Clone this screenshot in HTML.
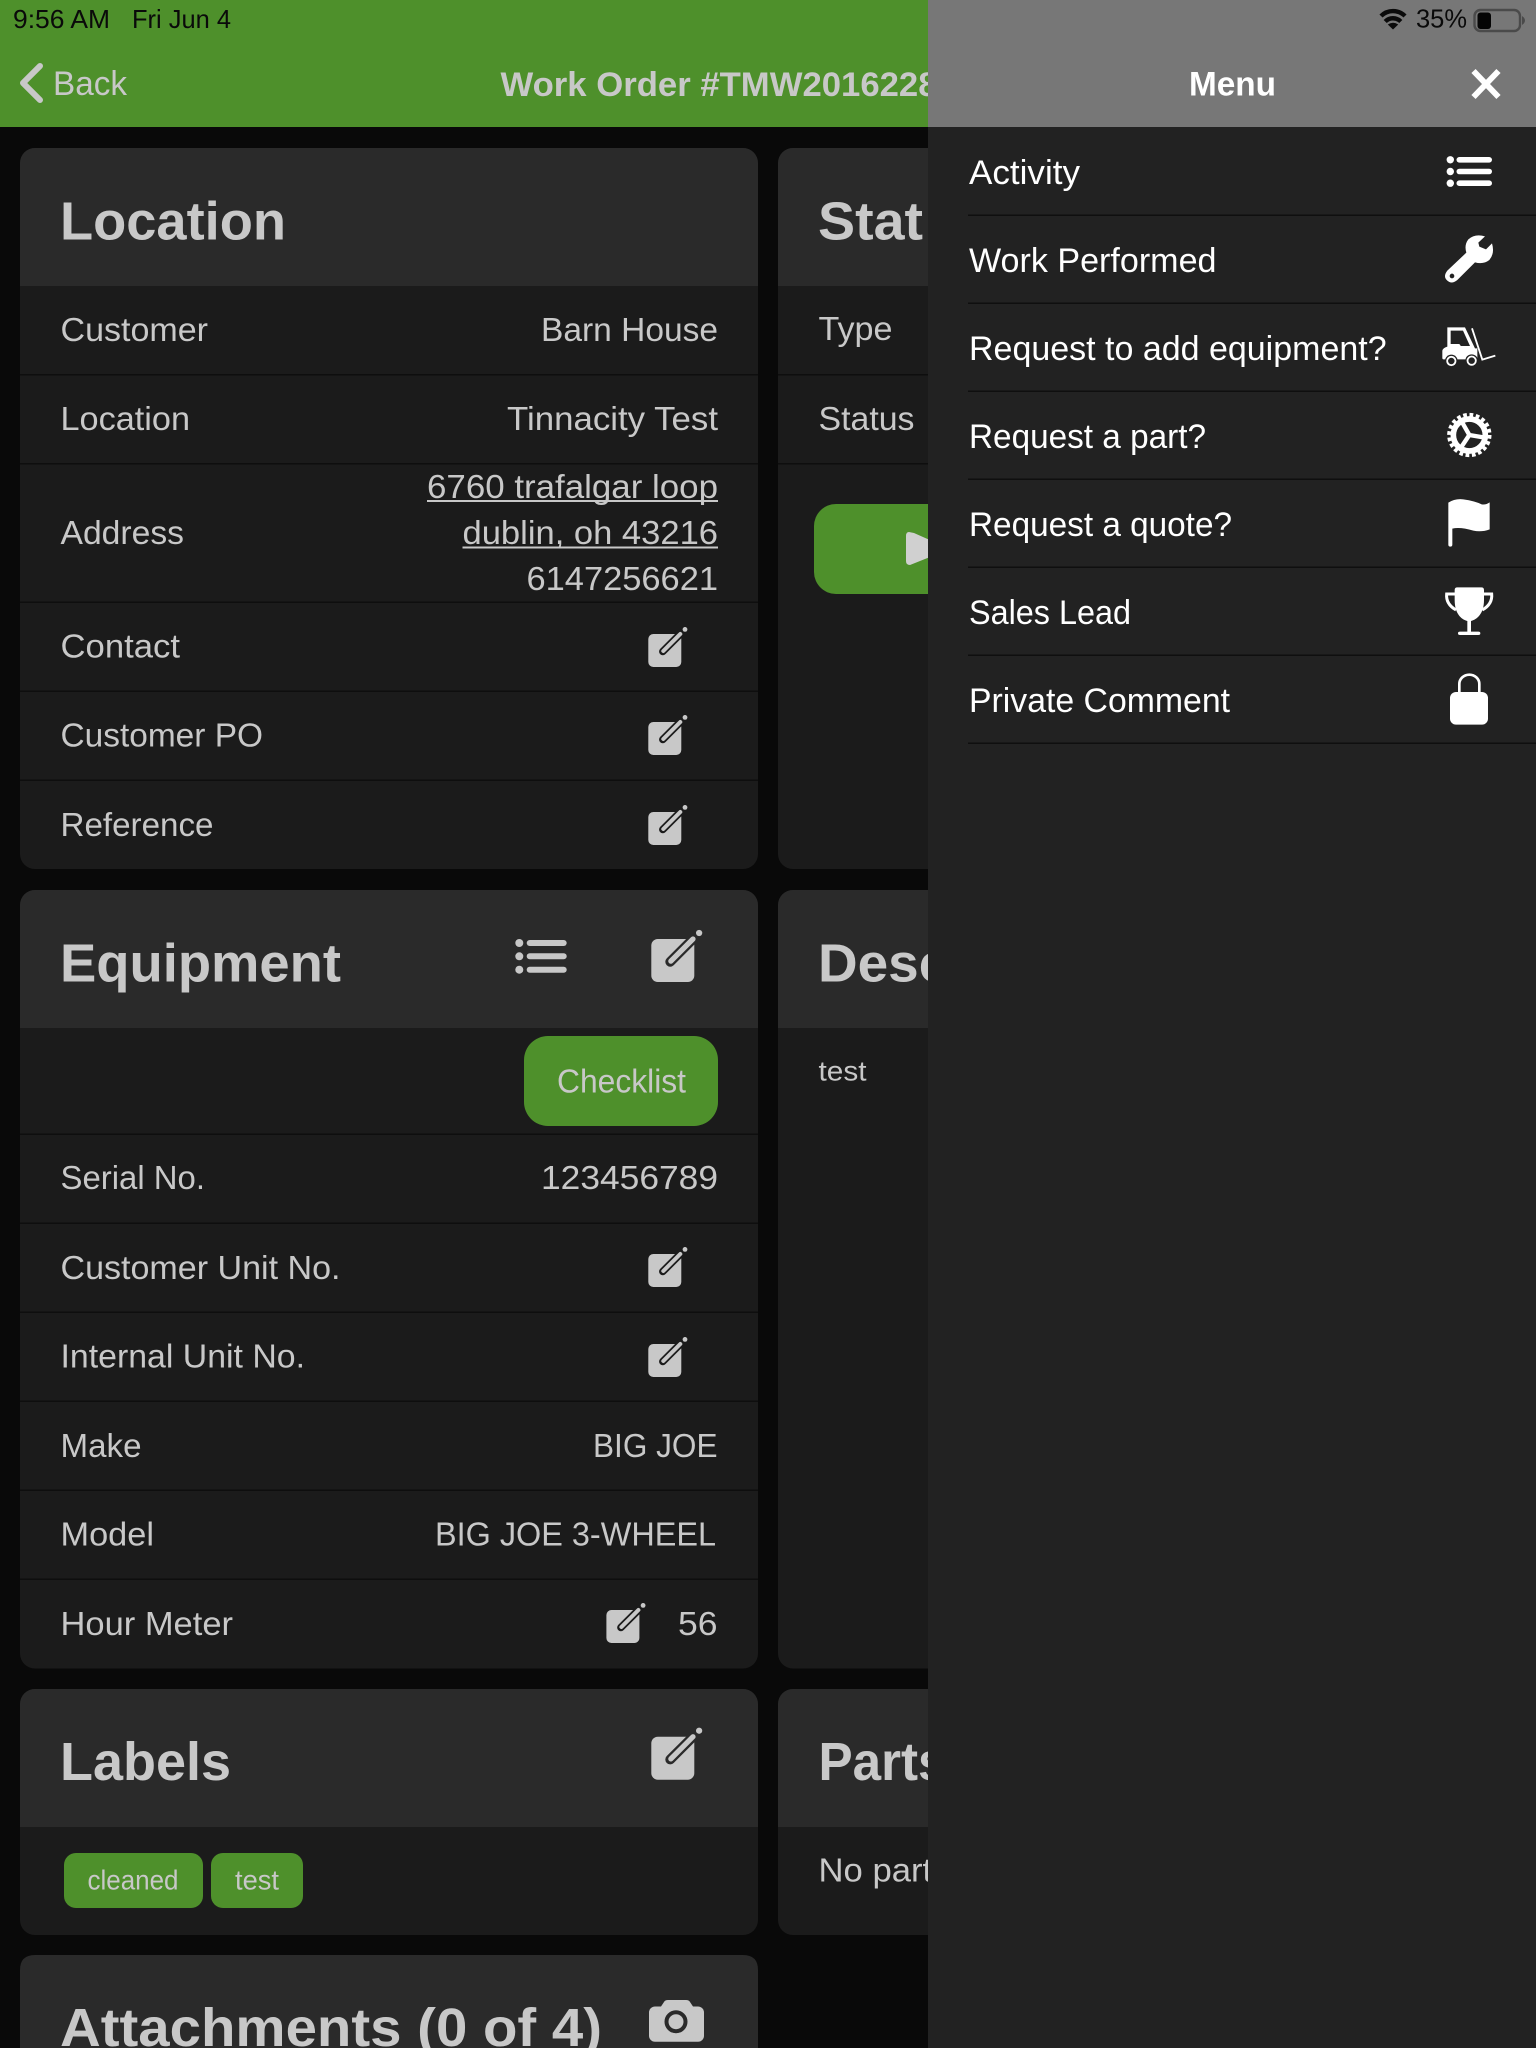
<!DOCTYPE html>
<html lang="en">
<head>
<meta charset="utf-8">
<title>Work Order</title>
<style>
html,body{margin:0;padding:0;background:#090909;width:1536px;height:2048px;overflow:hidden}
svg{display:block;position:absolute;left:0;top:0;overflow:hidden}
text{font-family:"Liberation Sans",sans-serif;fill:#c8c8c8}
.b{font-size:33px}
.h{font-size:54px;font-weight:700}
.s{font-size:26px;fill:#0a0a0a}
.m{font-size:34px;fill:#fff}
.t{font-size:34px;font-weight:700}
.sm{font-size:28px}
.sep{fill:#0e0e0e}
.head{fill:#2a2a2a}
.body{fill:#1b1b1b}
.grn{fill:#4e902b}
</style>
</head>
<body>
<svg width="1536" height="2048" viewBox="0 0 1536 2048" xmlns="http://www.w3.org/2000/svg">
<defs>
<g id="ed">
  <rect x="0" y="0" width="33" height="33" rx="5" fill="#c8c8c8"/>
  <path d="M14.5 17.5 L33 -1" stroke="#1b1b1b" stroke-width="7.5" stroke-linecap="round" fill="none"/>
  <path d="M15 17 L32 0" stroke="#c8c8c8" stroke-width="4" stroke-linecap="round" fill="none"/>
  <circle cx="36.7" cy="-4.6" r="2.4" fill="#c8c8c8"/>
</g>
<g id="edh">
  <rect x="0" y="0" width="33" height="33" rx="5" fill="#c8c8c8"/>
  <path d="M14.5 17.5 L33 -1" stroke="#2a2a2a" stroke-width="7.5" stroke-linecap="round" fill="none"/>
  <path d="M15 17 L32 0" stroke="#c8c8c8" stroke-width="4" stroke-linecap="round" fill="none"/>
  <circle cx="36.7" cy="-4.6" r="2.4" fill="#c8c8c8"/>
</g>
<clipPath id="c1"><rect x="20" y="148" width="738" height="721" rx="15"/></clipPath>
<clipPath id="c2"><rect x="778" y="148" width="738" height="721" rx="15"/></clipPath>
<clipPath id="c3"><rect x="20" y="890" width="738" height="778.5" rx="15"/></clipPath>
<clipPath id="c4"><rect x="778" y="890" width="738" height="778.5" rx="15"/></clipPath>
<clipPath id="c5"><rect x="20" y="1689" width="738" height="246" rx="15"/></clipPath>
<clipPath id="c6"><rect x="778" y="1689" width="738" height="246" rx="15"/></clipPath>
<clipPath id="statclip"><rect x="800" y="190" width="125" height="70"/></clipPath>
<clipPath id="bottomclip"><rect x="0" y="1955" width="928" height="93"/></clipPath>
</defs>

<rect width="1536" height="2048" fill="#090909"/>

<!-- top bar -->
<rect width="1536" height="127" fill="#4e902b"/>
<text class="s" x="13" y="28" textLength="97" lengthAdjust="spacingAndGlyphs">9:56 AM</text>
<text class="s" x="132" y="28" textLength="99" lengthAdjust="spacingAndGlyphs">Fri Jun 4</text>
<polyline points="40,66 23,83 40,100" fill="none" stroke="#c8c8c8" stroke-width="6" stroke-linecap="round" stroke-linejoin="round"/>
<text x="53" y="95" font-size="34" textLength="74" lengthAdjust="spacingAndGlyphs">Back</text>
<text class="t" x="500.5" y="96" textLength="437" lengthAdjust="spacingAndGlyphs">Work Order #TMW2016228</text>

<!-- Location card -->
<g clip-path="url(#c1)">
  <rect class="body" x="20" y="148" width="738" height="721"/>
  <rect class="head" x="20" y="148" width="738" height="138"/>
  <rect class="sep" x="20" y="374" width="738" height="1.5"/>
  <rect class="sep" x="20" y="463" width="738" height="1.5"/>
  <rect class="sep" x="20" y="601.5" width="738" height="1.5"/>
  <rect class="sep" x="20" y="690.5" width="738" height="1.5"/>
  <rect class="sep" x="20" y="779.5" width="738" height="1.5"/>
</g>
<text class="h" x="60" y="239.5" textLength="226" lengthAdjust="spacingAndGlyphs">Location</text>
<text class="b" x="60.5" y="341" textLength="147.5" lengthAdjust="spacingAndGlyphs">Customer</text>
<text class="b" x="541" y="341" textLength="177" lengthAdjust="spacingAndGlyphs">Barn House</text>
<text class="b" x="60.5" y="430" textLength="129.5" lengthAdjust="spacingAndGlyphs">Location</text>
<text class="b" x="507" y="430" textLength="211" lengthAdjust="spacingAndGlyphs">Tinnacity Test</text>
<text class="b" x="60.5" y="544" textLength="123.5" lengthAdjust="spacingAndGlyphs">Address</text>
<text class="b" x="427" y="498" textLength="291" lengthAdjust="spacingAndGlyphs">6760 trafalgar loop</text>
<rect x="427" y="500" width="291" height="2" fill="#c8c8c8"/>
<text class="b" x="462.5" y="544" textLength="255.5" lengthAdjust="spacingAndGlyphs">dublin, oh 43216</text>
<rect x="462.5" y="546.5" width="255.5" height="2" fill="#c8c8c8"/>
<text class="b" x="526.5" y="590" textLength="191.5" lengthAdjust="spacingAndGlyphs">6147256621</text>
<text class="b" x="60.5" y="657.5" textLength="119.5" lengthAdjust="spacingAndGlyphs">Contact</text>
<use href="#ed" x="648.3" y="634"/>
<text class="b" x="60.5" y="746.5" textLength="202.5" lengthAdjust="spacingAndGlyphs">Customer PO</text>
<use href="#ed" x="648.3" y="722"/>
<text class="b" x="60.5" y="836" textLength="153" lengthAdjust="spacingAndGlyphs">Reference</text>
<use href="#ed" x="648.3" y="812"/>

<!-- Status card -->
<g clip-path="url(#c2)">
  <rect class="body" x="778" y="148" width="738" height="721"/>
  <rect class="head" x="778" y="148" width="738" height="138"/>
  <rect class="sep" x="778" y="374" width="738" height="1.5"/>
  <rect class="sep" x="778" y="463" width="738" height="1.5"/>
</g>
<g clip-path="url(#statclip)"><text class="h" x="818" y="239.5" textLength="170" lengthAdjust="spacingAndGlyphs">Status</text></g>
<text class="b" x="818.5" y="340" textLength="74" lengthAdjust="spacingAndGlyphs">Type</text>
<text class="b" x="818.5" y="430" textLength="96" lengthAdjust="spacingAndGlyphs">Status</text>
<rect class="grn" x="814" y="504" width="300" height="90" rx="22"/>
<path d="M909 532 Q906 532 906 536 V561 Q906 565 910 565 L950 549 L914 533 Z" fill="#d0d0d0"/>

<!-- Equipment card -->
<g clip-path="url(#c3)">
  <rect class="body" x="20" y="890" width="738" height="778.5"/>
  <rect class="head" x="20" y="890" width="738" height="138"/>
  <rect class="sep" x="20" y="1133.5" width="738" height="1.5"/>
  <rect class="sep" x="20" y="1222.5" width="738" height="1.5"/>
  <rect class="sep" x="20" y="1311.5" width="738" height="1.5"/>
  <rect class="sep" x="20" y="1400.5" width="738" height="1.5"/>
  <rect class="sep" x="20" y="1489.5" width="738" height="1.5"/>
  <rect class="sep" x="20" y="1578.5" width="738" height="1.5"/>
</g>
<text class="h" x="60" y="981.5" textLength="281" lengthAdjust="spacingAndGlyphs">Equipment</text>
<g fill="#c8c8c8">
  <circle cx="519.3" cy="943" r="4"/><circle cx="519.3" cy="956.3" r="4"/><circle cx="519.3" cy="969.7" r="4"/>
  <rect x="526.7" y="940" width="40" height="6" rx="3"/><rect x="526.7" y="953.3" width="40" height="6" rx="3"/><rect x="526.7" y="966.7" width="40" height="6" rx="3"/>
</g>
<use href="#edh" transform="translate(651.3 939) scale(1.303)"/>
<rect class="grn" x="524" y="1036" width="194" height="90" rx="24"/>
<text class="b" x="557" y="1092.7" textLength="129" lengthAdjust="spacingAndGlyphs">Checklist</text>
<text class="b" x="60.5" y="1189" textLength="144.5" lengthAdjust="spacingAndGlyphs">Serial No.</text>
<text class="b" x="541" y="1189" textLength="177" lengthAdjust="spacingAndGlyphs">123456789</text>
<text class="b" x="60.5" y="1279" textLength="280" lengthAdjust="spacingAndGlyphs">Customer Unit No.</text>
<use href="#ed" x="648.3" y="1254"/>
<text class="b" x="60.5" y="1367.5" textLength="244.5" lengthAdjust="spacingAndGlyphs">Internal Unit No.</text>
<use href="#ed" x="648.3" y="1344"/>
<text class="b" x="60.5" y="1457" textLength="81" lengthAdjust="spacingAndGlyphs">Make</text>
<text class="b" x="593" y="1457" textLength="124.5" lengthAdjust="spacingAndGlyphs">BIG JOE</text>
<text class="b" x="60.5" y="1545.7" textLength="93.5" lengthAdjust="spacingAndGlyphs">Model</text>
<text class="b" x="435" y="1545.7" textLength="281" lengthAdjust="spacingAndGlyphs">BIG JOE 3-WHEEL</text>
<text class="b" x="60.5" y="1635" textLength="172.5" lengthAdjust="spacingAndGlyphs">Hour Meter</text>
<use href="#ed" x="606.4" y="1610"/>
<text class="b" x="678" y="1635" textLength="39.5" lengthAdjust="spacingAndGlyphs">56</text>

<!-- Description card -->
<g clip-path="url(#c4)">
  <rect class="body" x="778" y="890" width="738" height="778.5"/>
  <rect class="head" x="778" y="890" width="738" height="138"/>
</g>
<text class="h" x="818" y="981.5" textLength="302" lengthAdjust="spacingAndGlyphs">Description</text>
<text class="sm" x="818.5" y="1080.5" textLength="48" lengthAdjust="spacingAndGlyphs">test</text>

<!-- Labels card -->
<g clip-path="url(#c5)">
  <rect class="body" x="20" y="1689" width="738" height="246"/>
  <rect class="head" x="20" y="1689" width="738" height="138"/>
</g>
<text class="h" x="60" y="1780.2" textLength="171" lengthAdjust="spacingAndGlyphs">Labels</text>
<use href="#edh" transform="translate(651.3 1736.7) scale(1.303)"/>
<rect class="grn" x="64" y="1853" width="139" height="55" rx="12"/>
<text class="sm" x="87.5" y="1889.5" textLength="91" lengthAdjust="spacingAndGlyphs">cleaned</text>
<rect class="grn" x="211" y="1853" width="92" height="55" rx="12"/>
<text class="sm" x="235" y="1889.5" textLength="44" lengthAdjust="spacingAndGlyphs">test</text>

<!-- Parts card -->
<g clip-path="url(#c6)">
  <rect class="body" x="778" y="1689" width="738" height="246"/>
  <rect class="head" x="778" y="1689" width="738" height="138"/>
</g>
<text class="h" x="818.5" y="1780.2" textLength="128" lengthAdjust="spacingAndGlyphs">Parts</text>
<text class="b" x="818.5" y="1881.5" textLength="131" lengthAdjust="spacingAndGlyphs">No parts</text>

<!-- Attachments card -->
<path class="head" d="M20 2048 V1970 Q20 1955 35 1955 H743 Q758 1955 758 1970 V2048 Z"/>
<g clip-path="url(#bottomclip)"><text class="h" x="60" y="2046" textLength="542" lengthAdjust="spacingAndGlyphs">Attachments (0 of 4)</text></g>
<g fill="#c8c8c8">
  <rect x="649" y="2006.5" width="55" height="35.2" rx="6"/>
  <path d="M660 2008 L664 2002 Q665 2000 668 2000 H686 Q689 2000 690 2002 L694 2008 Z"/>
</g>
<circle cx="676" cy="2021.7" r="9.5" fill="#c8c8c8" stroke="#2a2a2a" stroke-width="4"/>

<!-- Right panel -->
<rect x="928" y="0" width="608" height="2048" fill="#222"/>
<rect x="928" y="0" width="608" height="127" fill="#777"/>
<g fill="none" stroke="#0a0a0a" stroke-width="4.4">
  <path d="M1381 16 A17 17 0 0 1 1405 16"/>
  <path d="M1385.2 21.5 A11 11 0 0 1 1400.8 21.5"/>
</g>
<path d="M1393 29.5 L1387.8 24.5 Q1393 21 1398.2 24.5 Z" fill="#0a0a0a"/>
<text class="s" x="1416" y="27.7" textLength="51" lengthAdjust="spacingAndGlyphs">35%</text>
<rect x="1474.5" y="10" width="45.5" height="21" rx="6" fill="none" stroke="#4a4a4a" stroke-width="2.4"/>
<rect x="1477.5" y="12.5" width="13.5" height="16.5" rx="3" fill="#050505"/>
<path d="M1522 16 Q1525 18 1525 20.5 Q1525 23 1522 25 Z" fill="#4a4a4a"/>
<text class="t" x="1189" y="95.7" style="fill:#fff" textLength="87" lengthAdjust="spacingAndGlyphs">Menu</text>
<path d="M1473.5 71 L1498.5 97 M1498.5 71 L1473.5 97" stroke="#fff" stroke-width="5.8" fill="none"/>

<!-- Menu rows -->
<text class="m" x="969" y="184" textLength="111" lengthAdjust="spacingAndGlyphs">Activity</text>
<text class="m" x="969" y="272" textLength="247.5" lengthAdjust="spacingAndGlyphs">Work Performed</text>
<text class="m" x="969" y="360" textLength="417.6" lengthAdjust="spacingAndGlyphs">Request to add equipment?</text>
<text class="m" x="969" y="448" textLength="237" lengthAdjust="spacingAndGlyphs">Request a part?</text>
<text class="m" x="969" y="536" textLength="263" lengthAdjust="spacingAndGlyphs">Request a quote?</text>
<text class="m" x="969" y="624" textLength="162" lengthAdjust="spacingAndGlyphs">Sales Lead</text>
<text class="m" x="969" y="712" textLength="261" lengthAdjust="spacingAndGlyphs">Private Comment</text>
<g fill="#0f0f0f">
  <rect x="968" y="214.5" width="568" height="1.5"/>
  <rect x="968" y="302.5" width="568" height="1.5"/>
  <rect x="968" y="390.5" width="568" height="1.5"/>
  <rect x="968" y="478.5" width="568" height="1.5"/>
  <rect x="968" y="566.5" width="568" height="1.5"/>
  <rect x="968" y="654.5" width="568" height="1.5"/>
  <rect x="968" y="742.5" width="568" height="1.5"/>
</g>

<!-- Activity -->
<g fill="#fff">
  <circle cx="1450.3" cy="159.8" r="3.7"/><circle cx="1450.3" cy="171.5" r="3.7"/><circle cx="1450.3" cy="183.2" r="3.7"/>
  <rect x="1456.5" y="157" width="35.5" height="5.6" rx="2.8"/><rect x="1456.5" y="168.7" width="35.5" height="5.6" rx="2.8"/><rect x="1456.5" y="180.4" width="35.5" height="5.6" rx="2.8"/>
</g>

<g transform="translate(1360 130) scale(0.33333)">
  <!-- Wrench -->
  <path d="M375 319 Q345 310 325 328 Q312 345 319 368 L262 422 Q248 440 262 452 Q275 464 292 450 L345 397 Q370 404 388 390 Q405 370 396 340 L378 358 L358 350 L355 338 Z" fill="#fff"/>
  <circle cx="276" cy="438" r="7" fill="#222"/>
  <!-- Forklift -->
  <path fill-rule="evenodd" d="M262 592 H315 L345 655 H352 V688 H250 Q247 688 247 684 V662 Q249 654 262 650 Z M272 602 V642 H296 Q300 642 302 648 H330 L309 602 Z" fill="#fff"/>
  <circle cx="274" cy="693" r="19" fill="#222"/>
  <circle cx="335" cy="692" r="19" fill="#222"/>
  <circle cx="274" cy="693" r="12.5" fill="#222" stroke="#fff" stroke-width="5.5"/>
  <circle cx="335" cy="692" r="12.5" fill="#222" stroke="#fff" stroke-width="5.5"/>
  <polyline points="336,595 367,689 406,677" fill="none" stroke="#fff" stroke-width="5.5"/>
</g>

<g transform="translate(1360 400) scale(0.33333)">
  <!-- Gear -->
  <circle cx="328" cy="105" r="48" fill="none" stroke="#fff" stroke-width="17"/>
  <circle cx="328" cy="105" r="60" fill="none" stroke="#fff" stroke-width="13" stroke-dasharray="11 7.85"/>
  <path d="M328 105 L307 68 M328 105 L370 112 M328 105 L304 141" stroke="#fff" stroke-width="13" fill="none"/>
  <!-- Flag -->
  <path d="M265 308 Q285 295 310 298 Q345 303 365 313 Q378 315 389 307 V388 Q365 397 340 392 Q300 380 277 386 V434 Q277 440 271 440 Q265 440 265 434 Z" fill="#fff"/>
  <!-- Trophy -->
  <path d="M285 582 H260 Q257 612 288 630 M370 582 H395 Q398 612 367 630" fill="none" stroke="#fff" stroke-width="9"/>
  <path d="M292 562 H364 Q372 562 372 570 V600 C372 640 352 658 333 663 V695 H355 Q361 695 361 700 Q361 705 355 705 H300 Q294 705 294 700 Q294 695 300 695 H322 V663 C303 658 284 640 284 600 V570 Q284 562 292 562 Z" fill="#fff"/>
  <!-- Lock -->
  <path d="M298 882 V852 A30 28 0 0 1 358 852 V882" fill="none" stroke="#fff" stroke-width="8"/>
  <rect x="270" y="876" width="114" height="98" rx="18" fill="#fff"/>
</g>
</svg>
</body>
</html>
